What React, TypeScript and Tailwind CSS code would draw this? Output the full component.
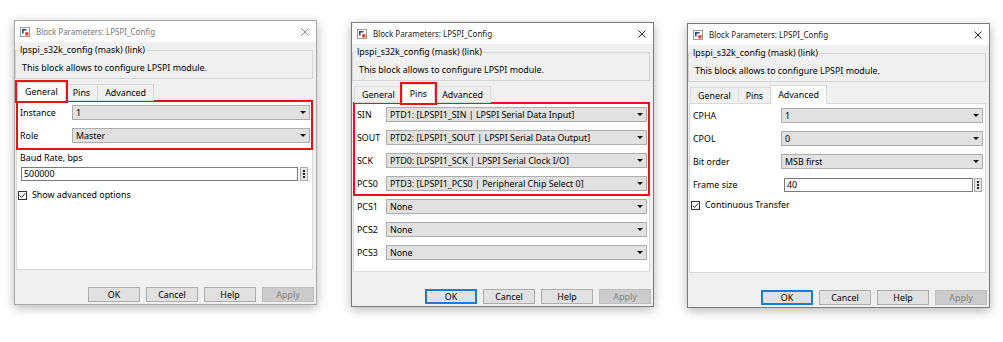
import React from "react";

type TabName = "General" | "Pins" | "Advanced";

const TABS: TabName[] = ["General", "Pins", "Advanced"];

const TitleIcon = () => (
  <svg width="10" height="10" viewBox="0 0 10 10" className="shrink-0">
    <rect x="0.5" y="0.5" width="9" height="9" fill="#fff" stroke="#9a9a9a" />
    <path d="M2 2h4.5v1.6H3.6V6.5H2z" fill="#27457f" />
    <rect x="5.2" y="5.2" width="3.3" height="3.3" fill="#e0432b" />
  </svg>
);

const CloseIcon = ({ inactive }: { inactive?: boolean }) => (
  <svg width="8" height="8" viewBox="0 0 8 8" className="shrink-0">
    <path
      d="M0.5 0.5l7 7M7.5 0.5l-7 7"
      stroke={inactive ? "#8a8a8a" : "#2b2b2b"}
      strokeWidth="1"
    />
  </svg>
);

const Select = ({ value }: { value: string }) => (
  <div className="flex h-[15px] min-w-0 flex-1 items-center justify-between border border-[#adadad] bg-[#e1e1e1] pl-[3px] pr-[3px]">
    <span className="truncate">{value}</span>
    <svg width="6" height="3" viewBox="0 0 6 3" className="shrink-0">
      <path d="M0 0h6L3 3z" fill="#111" />
    </svg>
  </div>
);

const Edit = ({ value }: { value: string }) => (
  <div className="flex h-[14px] min-w-0 flex-1 items-center border border-[#7a7a7a] bg-white pl-[2px]">
    {value}
  </div>
);

const Dots = () => (
  <div className="flex h-[14px] w-[8px] shrink-0 flex-col items-center justify-center gap-[1px] border border-[#adadad] bg-[#e6e6e6]">
    <span className="h-[2px] w-[2px] bg-[#222]" />
    <span className="h-[2px] w-[2px] bg-[#222]" />
    <span className="h-[2px] w-[2px] bg-[#222]" />
  </div>
);

const Row = ({
  label,
  labelClass,
  children,
}: {
  label: string;
  labelClass: string;
  children: React.ReactNode;
}) => (
  <div className="flex h-[23px] items-center pl-[3px] pr-[2px]">
    <span className={labelClass}>{label}</span>
    {children}
  </div>
);

const CheckBox = ({ label, className }: { label: string; className: string }) => (
  <div className={`flex h-[18px] items-center pl-[1px] ${className}`}>
    <span className="flex h-[9px] w-[9px] shrink-0 items-center justify-center border border-[#333] bg-white">
      <svg width="7" height="7" viewBox="0 0 7 7">
        <path d="M0.8 3.6l1.8 1.8L6.2 1.3" fill="none" stroke="#222" strokeWidth="1" />
      </svg>
    </span>
    <span className="ml-[5px]">{label}</span>
  </div>
);

const Button = ({ label, kind }: { label: string; kind: "normal" | "default" | "disabled" }) => {
  if (kind === "default") {
    return (
      <div className="flex h-[15px] w-[52px] items-center justify-center border-2 border-[#1a7bd6] bg-[#e1e1e1]">
        {label}
      </div>
    );
  }
  if (kind === "disabled") {
    return (
      <div className="flex h-[15px] w-[52px] items-center justify-center border border-[#bfbfbf] bg-[#cccccc] text-[#838383]">
        {label}
      </div>
    );
  }
  return (
    <div className="flex h-[15px] w-[52px] items-center justify-center border border-[#adadad] bg-[#e1e1e1]">
      {label}
    </div>
  );
};

interface DialogProps {
  className: string;
  activeTab: TabName;
  inactive?: boolean;
  okDefault?: boolean;
  markTab?: boolean;
  children: React.ReactNode;
}

const Dialog = ({ className, activeTab, inactive, okDefault, markTab, children }: DialogProps) => (
  <div
    className={`flex h-[285px] w-[303px] shrink-0 flex-col border bg-[#f0f0f0] shadow-[0_3px_10px_rgba(0,0,0,0.28)] ${
      inactive ? "border-[#a8a8a8]" : "border-[#7a7a7a]"
    } ${className}`}
  >
    {/* title bar */}
    <div className="flex h-[21px] shrink-0 items-center bg-white pl-[5px] pr-[7px]">
      <TitleIcon />
      <span
        className={`ml-[6px] flex-1 text-[8px] ${inactive ? "text-[#767676]" : "text-[#1a1a1a]"}`}
      >
        Block Parameters: LPSPI_Config
      </span>
      <CloseIcon inactive={inactive} />
    </div>

    {/* mask description */}
    <fieldset className="mr-[3px] mt-[2px] h-[35px] shrink-0 border border-[#d5d5d5]">
      <legend className="ml-[3px] px-[1px] leading-[12px]">lpspi_s32k_config (mask) (link)</legend>
      <div className="pl-[6px] pt-[6px]">This block allows to configure LPSPI module.</div>
    </fieldset>

    {/* tabs */}
    <div className="relative z-10 -mb-px mt-[3px] flex h-[19px] shrink-0 items-end pl-[2px]">
      {TABS.map((tab, i) => {
        const active = tab === activeTab;
        return (
          <div
            key={tab}
            className={`flex items-center justify-center border border-[#d9d9d9] px-[7px] ${
              i > 0 ? "-ml-px" : ""
            } ${
              active
                ? "relative z-10 h-[19px] border-b-white bg-white"
                : "h-[17px] bg-[#f0f0f0]"
            } ${active && markTab ? "outline-2 outline-[#e4141b]" : ""}`}
          >
            {tab}
          </div>
        );
      })}
    </div>

    {/* tab page */}
    <div className="ml-[1px] mr-[3px] flex h-[170px] shrink-0 flex-col border border-[#d9d9d9] bg-white">
      {children}
    </div>

    {/* buttons */}
    <div className="mt-[17px] flex justify-end gap-[6px] pr-[2px]">
      <Button label="OK" kind={okDefault ? "default" : "normal"} />
      <Button label="Cancel" kind="normal" />
      <Button label="Help" kind="normal" />
      <Button label="Apply" kind="disabled" />
    </div>
  </div>
);

const pins = [
  { label: "SIN", value: "PTD1: [LPSPI1_SIN | LPSPI Serial Data Input]" },
  { label: "SOUT", value: "PTD2: [LPSPI1_SOUT | LPSPI Serial Data Output]" },
  { label: "SCK", value: "PTD0: [LPSPI1_SCK | LPSPI Serial Clock I/O]" },
  { label: "PCS0", value: "PTD3: [LPSPI1_PCS0 | Peripheral Chip Select 0]" },
];

const unusedPins = ["PCS1", "PCS2", "PCS3"];

export default function App() {
  return (
    <div className="flex h-[342px] w-[1003px] items-start overflow-hidden bg-white pl-[14px] font-['Noto_Sans',sans-serif] text-[8.9px] leading-[12px] text-black">
      {/* General tab */}
      <Dialog className="mt-[20px]" activeTab="General" inactive markTab>
        <div className="pb-[2px] outline-2 -outline-offset-1 outline-[#e4141b]">
          <Row label="Instance" labelClass="w-[52px] shrink-0">
            <Select value="1" />
          </Row>
          <Row label="Role" labelClass="w-[52px] shrink-0">
            <Select value="Master" />
          </Row>
        </div>
        <div className="flex h-[17px] items-center pl-[3px]">Baud Rate, bps</div>
        <div className="flex h-[16px] items-center gap-[2px] pl-[4px] pr-[4px]">
          <Edit value="500000" />
          <Dots />
        </div>
        <CheckBox className="mt-[4px]" label="Show advanced options" />
      </Dialog>

      {/* Pins tab */}
      <Dialog className="ml-[34px] mt-[22px]" activeTab="Pins" okDefault markTab>
        <div className="outline-2 -outline-offset-1 outline-[#e4141b]">
          {pins.map((p) => (
            <Row key={p.label} label={p.label} labelClass="w-[29px] shrink-0">
              <Select value={p.value} />
            </Row>
          ))}
        </div>
        {unusedPins.map((p) => (
          <Row key={p} label={p} labelClass="w-[29px] shrink-0">
            <Select value="None" />
          </Row>
        ))}
      </Dialog>

      {/* Advanced tab */}
      <Dialog className="ml-[33px] mt-[23px]" activeTab="Advanced" okDefault>
        <Row label="CPHA" labelClass="w-[88px] shrink-0">
          <Select value="1" />
        </Row>
        <Row label="CPOL" labelClass="w-[88px] shrink-0">
          <Select value="0" />
        </Row>
        <Row label="Bit order" labelClass="w-[88px] shrink-0">
          <Select value="MSB first" />
        </Row>
        <Row label="Frame size" labelClass="w-[88px] shrink-0">
          <div className="ml-[3px] mr-[1px] flex min-w-0 flex-1 items-center gap-[1px]">
            <Edit value="40" />
            <Dots />
          </div>
        </Row>
        <CheckBox className="" label="Continuous Transfer" />
      </Dialog>
    </div>
  );
}
